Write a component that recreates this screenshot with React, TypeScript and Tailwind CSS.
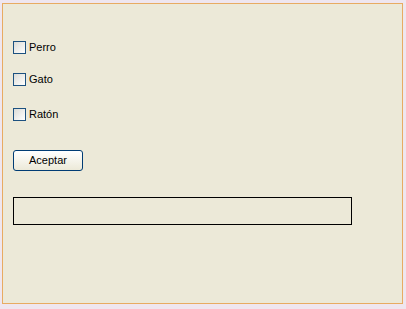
import React from "react";

function Check({ label, className }: { label: string; className?: string }) {
  return (
    <label className={"flex items-center h-[13px] " + (className ?? "")}>
      <span className="block w-[13px] h-[13px] border border-[#1c5180] bg-gradient-to-br from-[#dcdcd7] to-[#ffffff] box-border" />
      <span className="ml-[3px] text-[11px] leading-[13px] text-black">{label}</span>
    </label>
  );
}

export default function App() {
  return (
    <div className="w-[406px] h-[309px] bg-[#efe6ef] pl-[2px] pt-[3px]" style={{ fontFamily: '"Liberation Sans", Arial, sans-serif' }}>
      <div className="w-[401px] h-[301px] border border-[#e8ab62] bg-[#ece9d8] flex flex-col items-start pl-[10px]">
        <Check label="Perro" className="mt-[37px]" />
        <Check label="Gato" className="mt-[19px]" />
        <Check label="Ratón" className="mt-[22px]" />
        <button className="mt-[29px] w-[70px] h-[21px] rounded-[3px] border border-[#003c74] bg-gradient-to-b from-[#ffffff] to-[#ece9d8] text-[11px] text-black flex items-center justify-center">
          Aceptar
        </button>
        <div className="mt-[26px] w-[339px] h-[28px] border border-black bg-[#ece9d8]" />
      </div>
    </div>
  );
}
